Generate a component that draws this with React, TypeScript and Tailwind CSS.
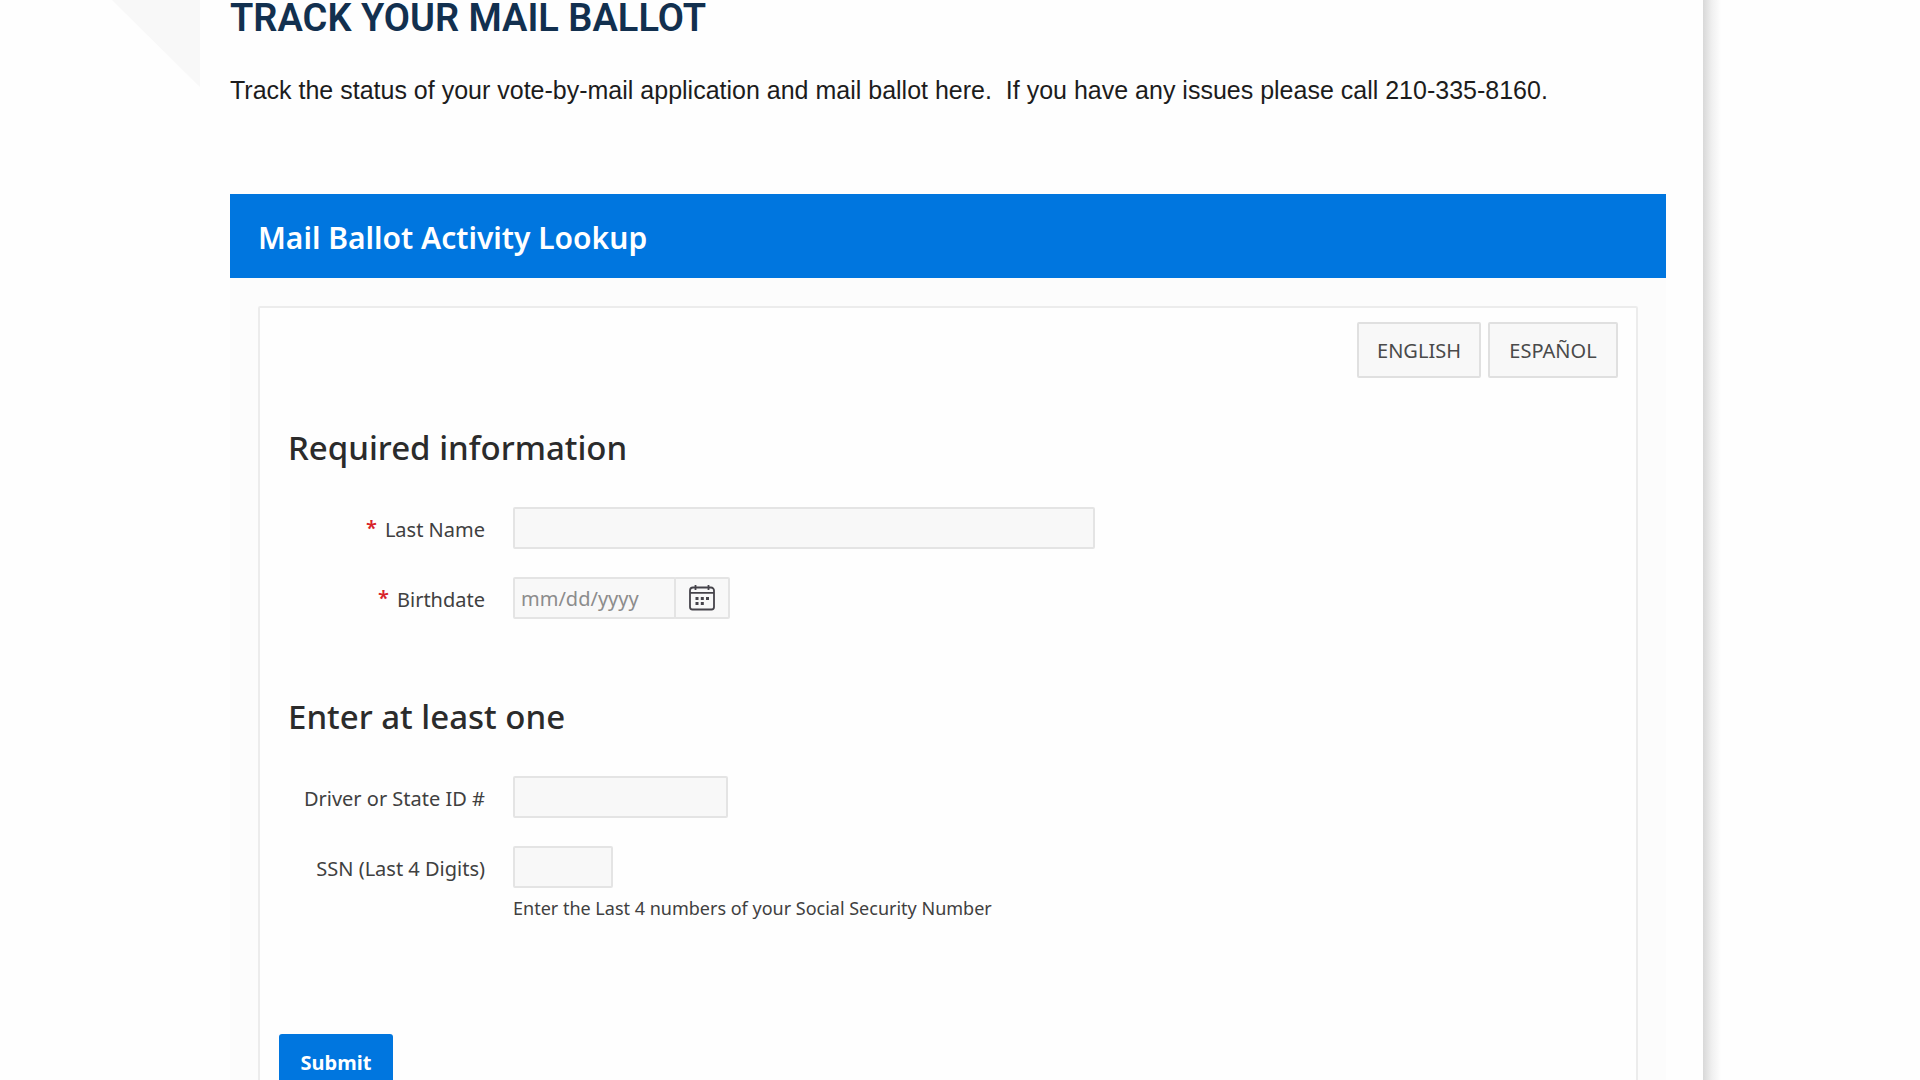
import type { InputHTMLAttributes, ReactNode } from "react";

const fieldBox = "h-[42px] rounded-[2px] border-2 border-[#e4e4e4] bg-[#f8f8f8] px-1.5 text-[20px] text-[#404040] outline-none";

function CalendarIcon() {
  return (
    <svg width="26" height="28" viewBox="0 0 26 28" fill="none" stroke="#45434a" strokeWidth="1.8" aria-hidden="true">
      <path d="M1 6.5a3 3 0 0 1 3-3h18a3 3 0 0 1 3 3V23a2.5 2.5 0 0 1-2.5 2.5h-19A2.5 2.5 0 0 1 1 23Z" />
      <path d="M1 8.8h24M6.5 1v5M19.5 1v5" />
      <path d="M6.5 14.5h3M11.8 14.5h3M17 14.5h3M6.5 19.5h3M11.8 19.5h3" strokeWidth="3" />
    </svg>
  );
}

function Row({ id, label, required, children }: { id: string; label: string; required?: boolean; children: ReactNode }) {
  return (
    <div className="flex items-start">
      <label htmlFor={id} className="flex h-[42px] w-[197px] shrink-0 items-center justify-end gap-2 pt-1 text-[20px] whitespace-nowrap text-[#404040]">
        {required && <span className="pb-1 text-[20px] font-semibold text-[#d8232a]">*</span>}
        {label}
      </label>
      <div className="ml-7">{children}</div>
    </div>
  );
}

function Field(props: InputHTMLAttributes<HTMLInputElement>) {
  return <input type="text" {...props} />;
}

function Section({ title, children }: { title: string; children: ReactNode }) {
  return (
    <section>
      <h3 className="text-[33px] leading-10 font-medium text-[#2b2b2b]">{title}</h3>
      <div className="mt-[39px] flex flex-col gap-7">{children}</div>
    </section>
  );
}

export default function App() {
  return (
    <div className="flex h-screen overflow-hidden bg-[#fefefe] font-['Noto_Sans',sans-serif]">
      <div className="flex w-[200px] shrink-0 justify-end">
        <svg width="88" height="87" viewBox="0 0 88 87" aria-hidden="true">
          <path d="M0 0H88V87Z" fill="#f8f8f8" />
        </svg>
      </div>
      <main className="min-w-0 flex-1 bg-[#fefefe] pr-[37px] pl-[30px]">
        <h1 className="font-['Roboto',sans-serif] text-[38px] leading-9 font-semibold text-[#12304f]">TRACK YOUR MAIL BALLOT</h1>
        <p className="mt-9 font-['Liberation_Sans',sans-serif] text-[25px] leading-9 text-[#1c1c1c]">
          Track the status of your vote-by-mail application and mail ballot here.&nbsp; If you have any issues please call 210-335-8160.
        </p>

        <div className="mt-[86px] bg-[#fcfcfc]">
          <h2 className="flex h-[84px] items-center bg-[#0076df] px-7 pt-0.5 text-[30px] font-semibold text-white">Mail Ballot Activity Lookup</h2>
          <form className="mx-7 mt-7 h-[900px] rounded-[2px] border-2 border-[#ececec] bg-[#fefefe] pt-3.5 pr-[18px] pl-[19px]" onSubmit={(e) => e.preventDefault()}>
            <div className="flex justify-end gap-[7px]">
              <button type="button" className="h-14 w-[124px] rounded-[2px] border-2 border-[#e0e0e0] bg-[#f8f8f8] pt-0.5 text-[20px] text-[#4a4a4a]">ENGLISH</button>
              <button type="button" className="h-14 w-[130px] rounded-[2px] border-2 border-[#e0e0e0] bg-[#f8f8f8] pt-0.5 text-[20px] text-[#4a4a4a]">ESPAÑOL</button>
            </div>

            <div className="mt-[50px] flex flex-col gap-[78px] pl-[9px]">
              <Section title="Required information">
                <Row id="last-name" label="Last Name" required>
                  <Field id="last-name" className={`w-[582px] ${fieldBox}`} />
                </Row>
                <Row id="birthdate" label="Birthdate" required>
                  <div className="flex">
                    <Field id="birthdate" placeholder="mm/dd/yyyy" className={`w-[163px] placeholder:text-[#8c8c8c] ${fieldBox}`} />
                    <button type="button" aria-label="Choose date" className="-ml-0.5 flex h-[42px] w-14 items-center justify-center rounded-[2px] border-2 border-[#e4e4e4] bg-[#f8f8f8]">
                      <CalendarIcon />
                    </button>
                  </div>
                </Row>
              </Section>
              <Section title="Enter at least one">
                <Row id="state-id" label="Driver or State ID #">
                  <Field id="state-id" className={`w-[215px] ${fieldBox}`} />
                </Row>
                <Row id="ssn" label="SSN (Last 4 Digits)">
                  <Field id="ssn" className={`w-[100px] ${fieldBox}`} />
                  <p className="mt-1 text-[18px] leading-8 text-[#404040]">Enter the Last 4 numbers of your Social Security Number</p>
                </Row>
              </Section>
            </div>
            <button type="submit" className="mt-[110px] block h-[58px] w-[114px] rounded-[3px] bg-[#0076df] text-[20px] font-bold text-white">Submit</button>
          </form>
        </div>
      </main>
      <div className="w-[217px] shrink-0">
        <div className="h-full w-[18px] bg-linear-to-r from-[#d8d8d8] via-[#f0f0f0] to-[#fefefe]" />
      </div>
    </div>
  );
}
